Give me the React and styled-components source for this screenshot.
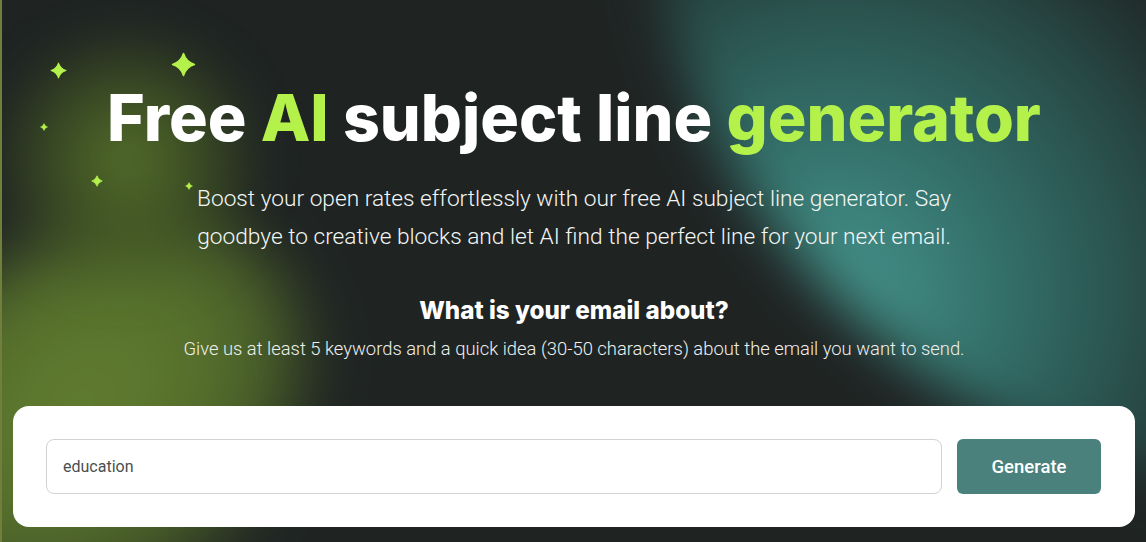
import React from "react";
import styled, { createGlobalStyle } from "styled-components";

const GlobalStyle = createGlobalStyle`
  html, body {
    margin: 0;
    padding: 0;
    background: #1f2423;
  }
  * {
    box-sizing: border-box;
  }
`;

const Page = styled.div`
  position: relative;
  width: 100%;
  height: 542px;
  overflow: hidden;
  border-left: 2px solid #717f3d;
  background: #1f2423;
`;

// soft coloured blobs behind the content
const Glow = styled.div`
  position: absolute;
  border-radius: 50%;
  pointer-events: none;
`;

const TealGlow = styled(Glow)`
  left: 580px;
  top: -300px;
  width: 1000px;
  height: 700px;
  transform: rotate(45deg);
  filter: blur(26px);
  background: radial-gradient(
    ellipse 44% 64% at 50% 100%,
    #46938c 0%,
    #3c827b 20%,
    #316863 45%,
    #294e4a 70%,
    #1f2625 100%
  );
`;

const OliveGlow = styled(Glow)`
  left: -190px;
  top: 250px;
  width: 520px;
  height: 360px;
  transform: rotate(-38deg);
  filter: blur(30px);
  background: radial-gradient(ellipse at 55% 45%, #627e30 0%, #56702c 35%, rgba(70, 92, 38, 0.6) 70%, rgba(40, 52, 30, 0) 100%);
`;

const TopGlow = styled(Glow)`
  left: -10px;
  top: 30px;
  width: 270px;
  height: 260px;
  filter: blur(22px);
  background: radial-gradient(circle at 50% 50%, rgba(88, 116, 42, 0.95) 0%, rgba(70, 92, 36, 0.6) 45%, rgba(40, 52, 30, 0) 75%);
`;

const Sparkle = styled.svg`
  position: absolute;
  fill: #b5f14b;
  stroke: #b5f14b;
  stroke-width: 1.5;
  stroke-linejoin: round;
`;

const Hero = styled.div`
  position: relative;
  display: flex;
  flex-direction: column;
  align-items: center;
  padding-top: 76px;
  font-family: Roboto, "Liberation Sans", sans-serif;
  color: #ffffff;
`;

const Title = styled.h1`
  margin: 0;
  font-family: Inter, "DejaVu Sans", sans-serif;
  font-weight: 800;
  font-size: 64.5px;
  line-height: 84px;
  letter-spacing: 0;
  color: #ffffff;
  text-align: center;
`;

const Accent = styled.span`
  color: #b5f14b;
`;

const Lead = styled.p`
  margin: 20px 0 0;
  max-width: 800px;
  font-size: 22.7px;
  font-weight: 300;
  line-height: 38px;
  text-align: center;
  color: #f4f6f5;
`;

const Question = styled.h2`
  margin: 40px 0 0;
  font-family: Inter, "DejaVu Sans", sans-serif;
  font-weight: 800;
  font-size: 24.2px;
  line-height: 30px;
`;

const Hint = styled.p`
  margin: 11px 0 0;
  font-size: 18.4px;
  font-weight: 300;
  line-height: 24px;
  color: #eef0ef;
`;

const Card = styled.form`
  display: flex;
  gap: 15px;
  margin: 45px auto 0;
  width: 1122px;
  padding: 33px 34px 33px 33px;
  background: #ffffff;
  border-radius: 16px;
`;

const Field = styled.input`
  flex: 1;
  height: 55px;
  padding: 0 16px;
  border: 1px solid #cfd3d3;
  border-radius: 8px;
  font-family: Roboto, "Liberation Sans", sans-serif;
  font-size: 16px;
  font-weight: 400;
  color: #4a4f50;
  outline: none;
`;

const Button = styled.button`
  width: 144px;
  height: 55px;
  border: none;
  border-radius: 6px;
  background: #4a817c;
  color: #ffffff;
  font-family: Roboto, "Liberation Sans", sans-serif;
  font-size: 18.5px;
  font-weight: 500;
  cursor: pointer;
`;

const sparkles = [
  { x: 48, y: 62, s: 17 },
  { x: 169, y: 52, s: 25 },
  { x: 38, y: 123, s: 8 },
  { x: 89, y: 175, s: 12 },
  { x: 183, y: 182, s: 8 },
];

const Star = ({ x, y, s }) => (
  <Sparkle viewBox="0 0 24 24" width={s} height={s} style={{ left: x, top: y }}>
    <path d="M12 1.5 Q14.5 9.5 22.5 12 Q14.5 14.5 12 22.5 Q9.5 14.5 1.5 12 Q9.5 9.5 12 1.5 Z" />
  </Sparkle>
);

export default function App() {
  return (
    <>
      <GlobalStyle />
      <Page>
        <TealGlow />
        <OliveGlow />
        <TopGlow />
        {sparkles.map((p, i) => (
          <Star key={i} {...p} />
        ))}
        <Hero>
          <Title>
            Free <Accent>AI</Accent> subject line <Accent>generator</Accent>
          </Title>
          <Lead>
            Boost your open rates effortlessly with our free AI subject line generator. Say
            goodbye to creative blocks and let AI find the perfect line for your next email.
          </Lead>
          <Question>What is your email about?</Question>
          <Hint>
            Give us at least 5 keywords and a quick idea (30-50 characters) about the email you want to send.
          </Hint>
          <Card onSubmit={(e) => e.preventDefault()}>
            <Field defaultValue="education" />
            <Button type="submit">Generate</Button>
          </Card>
        </Hero>
      </Page>
    </>
  );
}
